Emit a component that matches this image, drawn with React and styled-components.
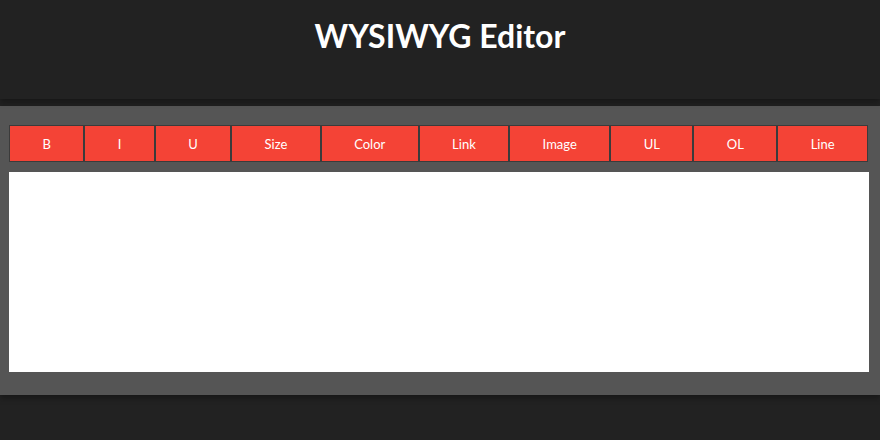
import styled, { createGlobalStyle } from 'styled-components';

const GlobalStyle = createGlobalStyle`
  html, body {
    margin: 0;
    padding: 0;
    background: #222222;
    font-family: Lato, "Noto Sans", sans-serif;
  }
`;

const tools = ['B', 'I', 'U', 'Size', 'Color', 'Link', 'Image', 'UL', 'OL', 'Line'];

const App = () => {
  return (
    <>
      <GlobalStyle />
      <Page>
        <Header>
          <Title>WYSIWYG Editor</Title>
        </Header>
        <Panel>
          <Toolbar>
            {tools.map((t) => (
              <ToolButton key={t}>{t}</ToolButton>
            ))}
          </Toolbar>
          <EditArea contentEditable suppressContentEditableWarning />
        </Panel>
        <Footer />
      </Page>
    </>
  );
};

export default App;

const Page = styled.div`
  width: 880px;
  height: 440px;
  display: flex;
  flex-direction: column;
  background: #222222;
  overflow: hidden;
`;

const Header = styled.header`
  height: 99px;
  display: flex;
  justify-content: center;
  position: relative;
  z-index: 1;
  box-shadow: 0 3px 6px rgba(0, 0, 0, 0.35);
`;

const Title = styled.h1`
  margin: 16px 0 0;
  font-size: 32px;
  font-weight: 700;
  color: #ffffff;
  line-height: 40px;
`;

const Panel = styled.section`
  margin-top: 7px;
  height: 289px;
  box-sizing: border-box;
  padding: 19px 11px 0 9px;
  background: #555555;
  box-shadow: 0 3px 6px rgba(0, 0, 0, 0.35);
  display: flex;
  flex-direction: column;
  gap: 10px;
`;

const Toolbar = styled.div`
  display: flex;
  height: 37px;
  margin-right: 1px;
`;

const ToolButton = styled.button`
  flex: 1 1 auto;
  padding: 0 20px;
  height: 37px;
  box-sizing: border-box;
  border: 1px solid #3b3b3b;
  background: #f44336;
  color: #ffffff;
  font-family: Lato, "Noto Sans", sans-serif;
  font-size: 13px;
  cursor: pointer;
`;

const EditArea = styled.div`
  height: 200px;
  background: #ffffff;
  outline: none;
  font-family: Lato, "Noto Sans", sans-serif;
  font-size: 14px;
  color: #222;
`;

const Footer = styled.div`
  flex: 1;
`;
